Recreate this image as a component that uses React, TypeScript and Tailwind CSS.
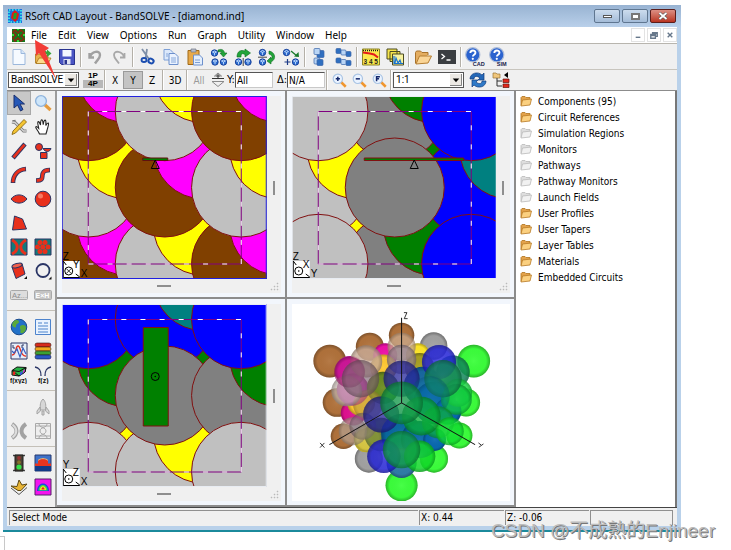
import React from "react";

const R = "#e8301c";
const NAVY = "#2a3565";

const Ico = ({ children, size = "h-[18px] w-[18px]" }: any) => (
  <svg viewBox="0 0 18 18" className={`${size} shrink-0`} aria-hidden="true">
    {children}
  </svg>
);

const Cube = ({ x, y }: any) => (
  <g>
    <circle cx={x} cy={y} r="3.2" fill="#2f6fd0" stroke="#123a96" strokeWidth=".9" />
    <path d={`M${x - 2} ${y - 1}l2-1 2 1-2 1zM${x} ${y}v2.4`} fill="none" stroke="#cfe4ff" strokeWidth=".8" />
  </g>
);

const BlueBox = ({ x, y, s = 7, c = "#2f6fc0" }: any) => (
  <rect x={x} y={y} width={s} height={s} rx="1" fill={c} stroke="#3a64a8" strokeWidth=".7" />
);

const Help = ({ label }: any) => (
  <Ico size="h-[20px] w-[20px]">
    <circle cx="7" cy="7" r="6.4" fill="#2b63cf" stroke="#aebdd8" strokeWidth="1" />
    <path d="M4.800 5.400c0-3 4.600-3 4.600-.2 0 1.800-2.300 1.800-2.300 3.400" fill="none" stroke="#fff" strokeWidth="1.700" />
    <circle cx="7" cy="10.600" r="1" fill="#fff" />
    <text x="7" y="17" fontSize="5" fontWeight="700" fill="#16204a" fontFamily="Liberation Sans, sans-serif">{label}</text>
  </Ico>
);

const Magnifier = ({ children }: any) => (
  <Ico size="h-[15px] w-[15px]">
    <path d="M10.500 10.500l6 6" stroke="#f0962e" strokeWidth="3" />
    <circle cx="7" cy="7" r="5.600" fill="#eaf3ff" stroke="#a9c4e4" strokeWidth="1.400" />
    <g stroke="#14286c" strokeWidth="1.800" fill="none">{children}</g>
  </Ico>
);

const Folder = ({ on }: any) => (
  <svg viewBox="0 0 12 12" className="h-3 w-3 shrink-0" aria-hidden="true">
    <path d="M1 10.500V2.500L2 1.500h3l1 1h4v3" fill={on ? "#e3a24b" : "#dedede"} stroke={on ? "#b0731f" : "#bababa"} strokeWidth=".8" />
    <path d="M1 11l1.500-6 9-1L10 10z" fill={on ? "#fbd080" : "#f1f1f1"} stroke={on ? "#b87a25" : "#bababa"} strokeWidth=".8" />
  </svg>
);

const fileTools = [
  [
    ["New", <Ico><path d="M3 1.500h8l4 4v11H3z" fill="#f6faff" stroke="#9cb8dc" /><path d="M11 1.500v4h4" fill="#d5e5f8" stroke="#9cb8dc" /></Ico>],
    ["Open", <Ico><path d="M1.500 15V6h5l1.500 1.500h6V15z" fill="#e9b04c" stroke="#a87416" strokeWidth=".8" /><path d="M2 15.500l3-5.500h12l-3 5.500z" fill="#fbdc8d" stroke="#a87416" strokeWidth=".8" /><path d="M7 6c1-4 5-4 6-2V1.500l4.500 4L13 9V6.500c-2-1-4-.5-4 1z" fill="#38a33c" /></Ico>],
    ["Save", <Ico><path d="M1.500 1.500h15v15h-13l-2-2z" fill="#4a55c4" stroke="#29338f" /><path d="M4.500 2h9v6.500h-9z" fill="#f3f6ff" /><path d="M5.500 11h7v5.500h-7z" fill="#dfe3f3" /><path d="M6.500 12h2.500v4H6.500z" fill="#29338f" /></Ico>],
  ],
  [
    ["Undo", <Ico><path d="M3.500 5v4.500H8M4 9c1.500-5.500 10-7.500 10-2 0 3.500-2.500 4.500-5 8.500" fill="none" stroke="#a0a0a0" strokeWidth="2.400" /></Ico>],
    ["Redo", <Ico><path d="M14.500 5v4.500H10M14 9C12.500 3.500 4 1.500 4 7c0 3.500 2.500 4.500 5 8.500" fill="none" stroke="#a8a8a8" strokeWidth="1.800" /></Ico>],
  ],
  [
    ["Cut", <Ico><path d="M4 1l7 10M9 1L7.500 11" stroke="#7e8fa8" strokeWidth="1.800" /><ellipse cx="6" cy="12" rx="2.500" ry="2" fill="none" stroke="#1c4eb0" strokeWidth="1.800" /><ellipse cx="13" cy="13" rx="2.700" ry="2.200" fill="none" stroke="#1c4eb0" strokeWidth="2" transform="rotate(30 13 13)" /></Ico>],
    ["Copy", <Ico><path d="M2 1.500h6l3 3V12H2z" fill="#dce9fb" stroke="#7d9fd6" /><path d="M7 5.500h6l3 3v8H7z" fill="#eaf2ff" stroke="#6d90cc" /><path d="M9 10h5M9 12h5M9 14h5M4 6h2M4 8h2" stroke="#7d9fd6" strokeWidth=".9" /></Ico>],
    ["Paste", <Ico><path d="M2 2.500h11v14H2z" fill="#e7a94a" stroke="#a16a17" /><path d="M5 1h5v3H5z" fill="#b8bfcc" stroke="#6d7382" strokeWidth=".7" /><path d="M7.500 7h6l3 3v7h-9z" fill="#e3eefc" stroke="#6d90cc" /><path d="M9 12h5M9 14.500h5" stroke="#7d9fd6" /></Ico>],
    ["Duplicate", <Ico><Cube x={4.500} y={5} /><Cube x={5} y={14} /><Cube x={13.500} y={14} /><path d="M8 2c4-1.500 6 0 6.500 3H17l-3.500 4L10 5h2c-.5-1.500-2-1.500-4-1z" fill="#22a53a" stroke="#0f6b20" strokeWidth=".6" /></Ico>],
    ["Rotate", <Ico><Cube x={4.500} y={14} /><Cube x={14} y={14} /><path d="M9.200 10v8" stroke="#333" strokeWidth=".9" /><path d="M3 9c0-6 4-7.500 8-6V1l5.500 4L11 9V6.500C8 5 7 5.500 7 9z" fill="#22a53a" stroke="#0f6b20" strokeWidth=".6" /></Ico>],
    ["Mirror", <Ico><Cube x={4.500} y={4.500} /><Cube x={4.500} y={14} /><path d="M0 9.200h9" stroke="#333" strokeWidth=".9" /><path d="M11 3c6 1 8 8 2 11v2l-4-3 4-4v2c2-2 1-4-2-5z" fill="#22a53a" stroke="#0f6b20" strokeWidth=".6" /></Ico>],
    ["Translate", <Ico><Cube x={4.500} y={4.500} /><Cube x={13.500} y={14} /><path d="M9 3l6 5" fill="none" stroke="#1a7a2c" strokeWidth="1.300" /><path d="M17 9l-5-.5L16.500 4z" fill="#1a7a2c" /><path d="M2.500 14h6M5.500 11v6" stroke="#1c3a86" strokeWidth="1.200" /></Ico>],
  ],
  [
    ["Group", <Ico><BlueBox x={7} y={2.500} /><BlueBox x={4} y={.5} s={6} c="#b9d5f5" /><BlueBox x={4} y={10} s={6} c="#b9d5f5" /><BlueBox x={7} y={11.500} s={6} /></Ico>],
    ["Ungroup", <Ico><BlueBox x={2} y={.5} s={5} /><BlueBox x={12} y={3.500} s={5} /><BlueBox x={7} y={2} s={5} c="#b9d5f5" /><BlueBox x={2} y={10} s={5} /><BlueBox x={12} y={12.500} s={5} /><BlueBox x={7} y={11.500} s={5} c="#b9d5f5" /></Ico>],
  ],
  [
    ["Run monitor", <Ico><path d="M.5 1h17v16H.5z" fill="#fbe84c" stroke="#8d8424" /><path d="M1 2.500h16" stroke="#1d1d1d" strokeWidth="1.500" strokeDasharray="1 1" /><path d="M1 4.500l7 1 4 1 4 3" stroke="#e31b1b" strokeWidth="2" fill="none" /><text x="1.500" y="15.500" fontSize="6.500" fontWeight="700" fill="#222" fontFamily="Liberation Sans, sans-serif">3 4 5</text></Ico>],
    ["Graph windows", <Ico><path d="M1 1h10v10H1zM4 3.500h10v10H4z" fill="#f6e54d" stroke="#4b4b22" /><path d="M6.500 6h11v11h-11z" fill="#f8f3a0" stroke="#4b4b22" /><path d="M8 8v7.500h9M9 15l1-5 2 5 2-3 1 3" stroke="#1773d1" fill="none" strokeWidth="1.200" /></Ico>],
  ],
  [
    ["Open folder", <Ico><path d="M1.500 15.500V4.500l1-1.500h4l1.500 1.500h6V7" fill="#e4ad60" stroke="#a8722b" /><path d="M2 16l3.500-8h12L14 15z" fill="#fad596" stroke="#b57e32" /></Ico>],
    ["Console", <Ico><path d="M0 2h18v14H0z" fill="#3a3d41" /><path d="M3.500 6l3 2.500-3 2.500M8.500 12h4" stroke="#fff" strokeWidth="1.300" fill="none" /></Ico>],
  ],
  [
    ["CAD help", <Help label="CAD" />],
    ["Simulation help", <Help label="SIM" />],
  ],
];

const palette = [
  [
    ["Select", <Ico><path d="M4 1l10.500 9H10l3 5.500-2.500 1.500-3-6L4 14z" fill="#2558b8" stroke="#1a2f6c" /></Ico>],
    ["Zoom", <Ico><path d="M10 10l6.500 6" stroke="#e59a3c" strokeWidth="3.200" /><circle cx="7" cy="7" r="5.400" fill="#cfe6fa" stroke="#8fb4dc" strokeWidth="1.400" /></Ico>],
    ["Edit", <Ico><path d="M2 4l3 .5 8.500 8.500h3M4 2l.5 3" stroke="#777" strokeWidth="3" fill="none" /><path d="M2 4l3 .5 8.500 8.500h3" stroke="#d4d4d4" strokeWidth="1.400" fill="none" /><path d="M14 1.500l2.500 2.500L5.500 15 2 16.500l1-3.500z" fill="#f4c431" stroke="#8b6a12" strokeWidth=".9" /></Ico>],
    ["Pan", <Ico><path d="M5.500 16c-1-3-4-5.500-3.800-7 .8-1 2 .2 3 1.400C4.500 8 3 5 4 3.700c1.200-.5 1.700 1.500 2.500 3.300 0-2 0-5 1.200-5.300 1.300 0 1.300 3 1.500 5 .3-2 .8-4.800 2-4.600 1.200.3.600 3.400.6 5.400.8-1.500 1.500-3 2.500-2.500 1 .8-.8 5-1.300 7.500-.4 1.500-.7 2-1 3.500z" fill="#fff" stroke="#222" strokeWidth="1.100" /></Ico>],
    ["Straight segment", <Ico><path d="M3 16L15 2" stroke={NAVY} strokeWidth="4.500" /><path d="M3.500 15.400l11-12.800" stroke={R} strokeWidth="2.600" /></Ico>],
    ["Shapes", <Ico><circle cx="5" cy="5" r="3.500" fill={R} stroke={NAVY} /><path d="M9 6.500h8c-1 4-6 4-8 0zM6.500 10.500h6.500v6H6.500z" fill={R} stroke={NAVY} /></Ico>],
    ["Arc", <Ico><path d="M3 17C3 9 8 3.500 16 3" fill="none" stroke={NAVY} strokeWidth="4.600" /><path d="M3 16.300C3 9 8 3.500 15.300 3" fill="none" stroke={R} strokeWidth="2.800" /></Ico>],
    ["S-bend", <Ico><path d="M2 14.500c9 0 5-4 7-7.500 1-2.500 3-3 7-3" fill="none" stroke={NAVY} strokeWidth="4.600" /><path d="M2.700 14.500c8.300 0 4.300-4 6.300-7.500 1-2.500 3-3 6.300-3" fill="none" stroke={R} strokeWidth="2.800" /></Ico>],
    ["Lens", <Ico><path d="M1 9c4-5.500 12-5.500 16 0-4 5.500-12 5.500-16 0z" fill={R} stroke={NAVY} /></Ico>],
    ["Sphere", <Ico><circle cx="9" cy="9" r="7.800" fill={R} stroke={NAVY} /><circle cx="6.500" cy="6" r="2.500" fill="#ff9a82" opacity=".7" /></Ico>],
    ["Polygon", <Ico><path d="M4.500 2l8 3 4 10-14 1z" fill={R} stroke={NAVY} /></Ico>],
    null,
    ["Region", <Ico><path d="M1 1h16v16H1z" fill="#147a7a" stroke={NAVY} /><path d="M2 2c7 4 7 10 0 14M16 2c-7 4-7 10 0 14" fill="none" stroke={R} strokeWidth="3" /></Ico>],
    ["Lattice", <Ico><path d="M1 1h16v16H1z" fill="#147a7a" stroke={NAVY} />{[[6, 4.500], [11, 4.500], [3.500, 9], [8.700, 9], [14, 9], [6, 13.500], [11, 13.500]].map(([x, y]) => <circle key={`${x}-${y}`} cx={x} cy={y} r="2.500" fill={R} />)}</Ico>],
    ["Cylinder", <Ico><path d="M2 5l10-3.500 3 10.500-9 4.500z" fill={R} stroke={NAVY} /><ellipse cx="7" cy="3.500" rx="5.200" ry="2" fill="#f0604c" stroke={NAVY} transform="rotate(-16 7 3.500)" /><path d="M17 14v3h-3z" fill="#111" /></Ico>],
    ["Ring", <Ico><circle cx="9" cy="8.500" r="6.500" fill="none" stroke={NAVY} strokeWidth="1.800" /><path d="M17.500 14.500v3h-3z" fill="#111" /></Ico>],
    ["Text", <Ico><rect x=".5" y="4.500" width="17" height="9" rx="1" fill="#ddd" stroke="#a9a9a9" /><text x="2" y="12" fontSize="7.500" fill="#8d8d8d" fontFamily="Liberation Sans, sans-serif">Az...</text></Ico>],
    ["Field", <Ico><rect x=".5" y="4.500" width="17" height="9" rx="1" fill="#c4c4c4" stroke="#a9a9a9" /><text x="1.500" y="11.800" fontSize="7" fontWeight="700" fill="#fff" fontFamily="Liberation Sans, sans-serif">E×H</text></Ico>],
  ],
  [
    ["Globe", <Ico><circle cx="9" cy="9" r="7.800" fill="#2271c8" stroke="#174a8c" /><path d="M3 4c3-3 6-2 6 0s-3 1-3 4-3 1-4-1zM10 8c3-2 6-1 6 2s-3 6-5 5 1-3-1-4z" fill="#5aa93a" /></Ico>],
    ["Table", <Ico><path d="M1.500 1.500h15v15h-15z" fill="#e9f3ff" stroke="#4d83cc" /><path d="M4 5h4M10 5h4M4 8h10M4 11h10M4 14h10" stroke="#4d83cc" strokeWidth="1.200" /></Ico>],
    ["Spectrum", <Ico><path d="M1 1h16v16H1z" fill="#e6edf8" stroke={NAVY} /><path d="M2 13c5 0 3-9 6-9s2 11 8 10" stroke={R} fill="none" strokeWidth="1.300" /><path d="M2 9l2 2 3-4 3 8 3-9 3 6" stroke="#355fc0" fill="none" strokeWidth="1.200" /><path d="M3 3v3h2M14 3h-2v3" stroke={NAVY} fill="none" /></Ico>],
    ["Layers", <Ico><rect x="1" y="1" width="16" height="4" rx="2" fill="#d62c1d" stroke="#3a1711" strokeWidth=".6" /><rect x="1" y="5" width="16" height="4" rx="2" fill="#f2a71c" stroke="#3a1711" strokeWidth=".6" /><rect x="1" y="9" width="16" height="4" rx="2" fill="#3ca035" stroke="#3a1711" strokeWidth=".6" /><rect x="1" y="13" width="16" height="4" rx="2" fill="#2c57c4" stroke="#111a45" strokeWidth=".6" /></Ico>],
    ["f(xyz)", <Ico><path d="M2 4.500L7 1l9 .5-1 4.500-6 4-7-1z" fill="#28b245" stroke="#111" /><path d="M2 4.500l7 1 7-4-1 4.500-6 4z" fill="none" stroke="#111" /><path d="M3 5.500l2.500.3L5 9l-2.300-.3z" fill="#e22" /><path d="M10 6.500l2.500-1.400v3L10 9.500z" fill="#3659dd" /><path d="M13 4.500l2-1.200-.5 2.700-1.500 1z" fill="#d436d8" /><text x="0" y="17" fontSize="6.500" fontWeight="700" fill="#111" fontFamily="Liberation Sans, sans-serif">f(xyz)</text></Ico>],
    ["f(z)", <Ico><path d="M1 1c5 1 6 4 6 9M17 1c-5 1-6 4-6 9" fill="none" stroke={NAVY} strokeWidth="1.300" /><text x="4" y="17" fontSize="7" fontWeight="700" fill="#111" fontFamily="Liberation Sans, sans-serif">f(z)</text></Ico>],
  ],
  [
    null,
    ["Launch", <Ico><path d="M9 1c3 3 3 6 2.500 11h-5C6 7 6 4 9 1zM6 9l-3 4v3l3.500-3zM12 9l3 4v3l-3.500-3zM8 13h2v4H8z" fill="#d6d6d6" stroke="#a5a5a5" /></Ico>],
    ["Pathway", <Ico><path d="M2 2c6 4 6 10 0 14M16 2c-6 4-6 10 0 14" fill="none" stroke="#a2a2a2" strokeWidth="4" /><path d="M2.500 2.500c5 4 5 9 0 13" fill="none" stroke="#dedede" strokeWidth="2" /></Ico>],
    ["Monitor", <Ico><path d="M1.500 1.500h15v15h-15z" fill="#eee" stroke="#a8a8a8" /><path d="M5 2c0 4 7 3 7 7s-7 3-7 7M13 2c0 4-7 3-7 7s7 3 7 7M2 4h14M2 14h14" fill="none" stroke="#a8a8a8" /></Ico>],
  ],
  [
    ["Run", <Ico><path d="M3 1.500h12M3 16.500h12" stroke="#444" strokeWidth="1.500" /><path d="M5 1h8v16H5z" fill="#4b4235" stroke="#1c1c1c" /><circle cx="9" cy="4" r="1.900" fill="#933" /><circle cx="9" cy="8.200" r="1.900" fill="#87702a" /><circle cx="9" cy="13" r="2.600" fill="#35e04a" /></Ico>],
    ["Index profile", <Ico><path d="M1 1h16v16H1z" fill="#3f72c8" stroke="#26386f" /><path d="M1 12h16v5H1z" fill="#123a86" /><path d="M1 12V9.500h3V6.500c2-2 8-2 10 0v3h3V12z" fill="#e6341f" /><path d="M4 6.500c2-2.500 8-2.500 10 0" fill="none" stroke="#f7b36a" /></Ico>],
    ["Mode solver", <Ico><path d="M1 10l8 6.500 8-7" fill="none" stroke="#555" /><path d="M1 8l6 .5L9 2l3 5 5-1-6 6.500-3 0z" fill="#e9b534" stroke="#5f4a14" /></Ico>],
    ["Field map", <Ico><path d="M1 1h16v16H1z" fill="#f414ee" stroke="#55206a" /><path d="M3 13c0-10 12-10 12 0z" fill="#2144e0" /><path d="M4.500 12.500c0-7.500 9-7.500 9 0z" fill="#3be04a" /><path d="M6 12c0-5 6-5 6 0z" fill="#f6e52a" /><path d="M7.500 11.500c0-3 3-3 3 0z" fill="#e22" /></Ico>],
  ],
];

const tree = [
  ["Components (95)", true],
  ["Circuit References", true],
  ["Simulation Regions", false],
  ["Monitors", false],
  ["Pathways", false],
  ["Pathway Monitors", false],
  ["Launch Fields", false],
  ["User Profiles", true],
  ["User Tapers", true],
  ["Layer Tables", true],
  ["Materials", true],
  ["Embedded Circuits", true],
] as const;

const BROWN = "#804000";
const LIGHT = "#c0c0c0";
const DARK = "#808080";
const BLUE = "#0000ff";
const GREEN = "#008000";
const TEAL = "#008080";
const YELLOW = "#ffff00";
const PINK = "#ff00ff";

// [column, row, colour] in painting order
const frontView = [
  [0, 2, BROWN], [0.5, 1.5, PINK],
  [0, 1, LIGHT], [1, 2, LIGHT], [0.5, 0.5, YELLOW], [1.5, 1.5, YELLOW],
  [0, 0, BROWN], [1, 1, BROWN], [2, 2, BROWN], [0.5, -0.5, PINK], [1.5, 0.5, PINK], [2.5, 1.5, PINK],
  [1, 0, LIGHT], [2, 1, LIGHT], [1.5, -0.5, YELLOW], [2.5, 0.5, YELLOW],
  [2, 0, BROWN], [2.5, -0.5, PINK],
] as const;

const sideView = [
  [0.5, 1.5, YELLOW], [1.5, 0.5, GREEN],
  [0, 1, LIGHT], [1, 2, DARK], [0.5, 0.5, YELLOW], [1.5, 1.5, GREEN],
  [1, 0, DARK], [2, 1, BLUE], [1.5, -0.5, GREEN], [2.5, 0.5, TEAL],
  [0, 0, LIGHT], [1, 1, DARK], [2, 2, BLUE], [0, 2, LIGHT], [2, 0, BLUE],
] as const;

const topView = [
  [0.5, 1.5, YELLOW], [0, 1, DARK], [0.5, 0.5, GREEN], [0, 0, BLUE], [0, 2, LIGHT],
  [1.5, 0.5, GREEN], [1, 0, BLUE], [1, 2, LIGHT], [1.5, -0.5, TEAL], [1.5, 1.5, YELLOW], [1, 1, DARK],
  [2, 1, DARK], [2.5, 0.5, GREEN], [2, 0, BLUE], [2, 2, LIGHT],
] as const;

const Axes = ({ up, mid, right, dot }: any) => (
  <g>
    <rect x="1" y="165" width="17" height="17" fill="#fff" />
    <path d="M1.500 165v16.500H18M1.500 165l3 4M18 181l-4-3" stroke="#000" fill="none" />
    <circle cx="7" cy="175" r="4" fill="#fff" stroke="#000" />
    {dot ? <circle cx="7" cy="175" r=".8" /> : <path d="M4.500 172.500l5 5M9.500 172.500l-5 5" stroke="#000" strokeWidth=".8" />}
    <g fontSize="10" fontFamily="Liberation Sans, sans-serif" fill="#000">
      <text x="1" y="164">{up}</text>
      <text x="11" y="172">{mid}</text>
      <text x="19" y="181">{right}</text>
    </g>
  </g>
);

const Pane = ({ children }: any) => (
  <div className="border-r-2 border-b-2 border-[#8c8c8c] bg-[#f2f6fc] pt-[5px] pr-1 pb-1 pl-[5px]">{children}</div>
);

const Scrolled = ({ title, circles, outline, axes, children }: any) => (
  <Pane>
    <div className="flex">
      <svg viewBox="0 0 205 183" preserveAspectRatio="xMidYMid slice" className="h-[183px] min-w-0 flex-1" role="img" aria-label={title}>
        {circles.map(([c, r, fill]: any, i: number) => (
          <circle key={i} cx={26.7 + c * 76.3} cy={15.2 + r * 76.3} r="49.500" fill={fill} stroke="#801010" />
        ))}
        <path d="M26.500 15.500h153v152.500h-153z" fill="none" stroke="#800080" />
        <path d="M26.500 15.500h153v152.500h-153z" fill="none" stroke="#fff" strokeDasharray="5 14.100" strokeDashoffset="-14" />
        {children}
        <Axes {...axes} />
        <rect x=".5" y=".5" width="204" height="182" fill="none" stroke={outline} />
      </svg>
      <div className="flex w-[14px] items-center justify-center bg-[#f0f0f0]">
        <div className="h-[14px] w-[2px] bg-[#8e8e8e]" />
      </div>
    </div>
    <div className="flex h-[14px] items-center bg-[#f0f0f0]">
      <div className="flex flex-1 justify-center">
        <div className="h-[2px] w-[14px] bg-[#8e8e8e]" />
      </div>
      <svg viewBox="0 0 14 14" className="h-[14px] w-[14px]" aria-hidden="true">
        <path d="M10 4h1v1h-1zM7 7h1v1H7zM10 7h1v1h-1zM4 10h1v1H4zM7 10h1v1H7zM10 10h1v1h-1z" fill="#9a9a9a" stroke="#c8c8c8" strokeWidth=".6" />
      </svg>
    </div>
  </Pane>
);

// [x, y, radius, colour, opacity], back to front
const balls = [
  [131, 195, 49, "#b07038", 0.98], [251, 152, 42, "#b07038", 0.98], [346, 118, 38, "#b07038", 0.98],
  [153, 319, 43, "#b07038", 0.98], [172, 420, 38, "#b07038", 0.98],
  [442, 150, 41, "#a2a2a2", 1], [248, 487, 42, "#a2a2a2", 1],
  [562, 195, 49, "#3cff3c", 1], [539, 319, 42, "#3cff3c", 1], [519, 418, 39, "#3cff3c", 1],
  [443, 487, 42, "#3cff3c", 1], [346, 567, 48, "#3cff3c", 1],
  [395, 178, 36, "#ffe628", 1], [297, 178, 36, "#ee10a8", 1], [192, 225, 45, "#ee20c8", 1],
  [202, 350, 38, "#e01090", 1], [240, 432, 36, "#ffe830", 1], [292, 215, 40, "#ffc830", 1],
  [225, 318, 42, "#ffc830", 1], [200, 280, 48, "#e020c0", 1],
  [400, 215, 44, "#a8a020", 1], [290, 275, 48, "#6c8c20", 1], [245, 325, 44, "#c0a040", 0.6],
  [285, 415, 50, "#70921c", 1], [410, 270, 58, "#1868a0", 1], [346, 415, 62, "#0868a0", 1],
  [445, 320, 64, "#0868b0", 1], [400, 430, 56, "#0868a8", 1], [485, 345, 40, "#0868b0", 1],
  [445, 430, 34, "#0868b0", 1], [346, 500, 45, "#307ca8", 1],
  [240, 196, 48, "#ccae9a", 0.82], [346, 152, 42, "#d0ae90", 0.75], [182, 284, 46, "#c0b4ac", 0.75],
  [200, 405, 42, "#b8a494", 0.7], [190, 228, 46, "#b81078", 0.6], [223, 248, 56, "#806474", 0.68],
  [346, 190, 44, "#988490", 0.75],
  [230, 390, 40, "#807080", 0.6], [245, 425, 42, "#a09860", 0.4],
  [500, 228, 50, "#128a5c", 0.85], [458, 198, 51, "#2424dc", 0.85], [346, 248, 54, "#28289c", 0.78],
  [285, 355, 54, "#24249c", 0.8], [293, 480, 50, "#2424d8", 0.85],
  [515, 290, 42, "#1cde44", 0.85], [510, 310, 46, "#10cc40", 0.8], [470, 248, 56, "#128e54", 0.8],
  [430, 300, 60, "#0870a0", 0.35],
  [455, 378, 48, "#0cb838", 0.7], [405, 360, 58, "#08b038", 0.8], [346, 320, 64, "#109a48", 0.8],
  [490, 405, 42, "#10e030", 0.8], [400, 480, 47, "#10dc28", 0.85], [346, 460, 56, "#10a048", 0.8],
] as const;

const Model = () => (
  <Pane>
    <svg viewBox="18 25 654 588" className="h-[197px] w-full bg-white" role="img" aria-label="3D view">
      <defs>
        <radialGradient id="shade">
          <stop offset="0" stopColor="#fff" stopOpacity=".06" />
          <stop offset=".75" stopColor="#000" stopOpacity=".02" />
          <stop offset="1" stopColor="#000" stopOpacity=".3" />
        </radialGradient>
      </defs>
      {balls.map(([x, y, r, fill, o], i) => (
        <g key={i} opacity={o}>
          <circle cx={x} cy={y} r={r} fill={fill} />
          <circle cx={x} cy={y} r={r} fill="url(#shade)" />
        </g>
      ))}
      <path d="M346 65v255L130 445M346 320l220 125" fill="none" stroke="#111" strokeWidth="3" />
      <path d="M353 50h9l-8 18h10M102 440l13 14M115 440l-13 14M576 440l8 6M591 443l-14 10" fill="none" stroke="#111" strokeWidth="2.500" />
    </svg>
  </Pane>
);

const Sep = () => <div className="mx-px h-5 w-[2px] shrink-0 border-l border-[#b4b0a8] bg-white" />;

const Combo = ({ label, value, width }: any) => (
  <div className={`relative ${width}`}>
    <select aria-label={label} className="h-4 w-full appearance-none border border-[#555] bg-white pl-[2px] font-[Roboto,sans-serif] text-[10px] leading-3 text-black">
      <option>{value}</option>
    </select>
    <svg viewBox="0 0 13 13" className="pointer-events-none absolute top-[2px] right-[2px] h-3 w-3" aria-hidden="true">
      <path d="M0 0h13v13H0z" fill="#ece9e4" />
      <path d="M12.500 0v12.500H0" fill="none" stroke="#777" />
      <path d="M3 5h7L6.500 9z" fill="#000" />
    </svg>
  </div>
);

const Field = ({ label, value }: any) => (
  <label className="flex items-center text-[11px]">
    {label}
    <input defaultValue={value} className="h-4 w-[38px] border border-[#c9c9c9] border-t-[#555] border-l-[#555] bg-white px-px text-[10px]" />
  </label>
);

const App = () => {
  return (
    <div className="relative bg-white pt-[5px] pr-[50px] pl-[3px] font-['DejaVu_Sans_Condensed','DejaVu_Sans',sans-serif] text-black">
      <div className="border-b-2 border-[#1b8a9c] bg-[#b9d1ea] px-1 pb-1">
        <header className="-mx-1 flex h-[22px] items-center bg-linear-to-b from-[#98b3d2] to-[#b9d0ea] pr-[5px] pl-[5px]">
          <svg viewBox="0 0 14 14" className="h-[14px] w-[14px]" aria-hidden="true">
            <path d="M0 0h14v14H0z" fill="#1d6fe0" />
            <path d="M1 1h12v12H1z" fill="none" stroke="#36e0e8" strokeWidth="2" strokeDasharray="1.500 1.500" />
            <path d="M7 1l4 4-1 5-3 3-4-4 1-5z" fill="#e01c16" />
            <path d="M6 4h3l-1 6H5z" fill="#1da32c" />
          </svg>
          <h1 className="ml-[3px] flex-1 font-['Noto_Sans',sans-serif] text-[10px] leading-4">RSoft CAD Layout - BandSOLVE - [diamond.ind]</h1>
          <div className="flex gap-[2px]">
            <button type="button" aria-label="Minimize" className="flex h-[14px] w-[26px] items-center justify-center rounded-[2px] border border-[#5f7690] bg-linear-to-b from-[#ccdcee] to-[#a4bcd8]">
              <span className="h-[3px] w-[9px] border border-[#555] bg-white" />
            </button>
            <button type="button" aria-label="Maximize" className="flex h-[14px] w-[26px] items-center justify-center rounded-[2px] border border-[#5f7690] bg-linear-to-b from-[#ccdcee] to-[#a4bcd8]">
              <span className="h-[7px] w-[9px] border-2 border-[#777] bg-white" />
            </button>
            <button type="button" aria-label="Close" className="flex h-[14px] w-[26px] items-center justify-center rounded-[2px] border border-[#5b1d1a] bg-linear-to-b from-[#dc8f84] to-[#b8321f]">
              <svg viewBox="0 0 10 8" className="h-2 w-[10px]" aria-hidden="true">
                <path d="M1.500 1l7 6M8.500 1l-7 6" stroke="#555" strokeWidth="3" />
                <path d="M1.500 1l7 6M8.500 1l-7 6" stroke="#fff" strokeWidth="1.800" />
              </svg>
            </button>
          </div>
        </header>

        <div className="bg-[#f0f0f0]">
          <nav className="flex h-4 items-center bg-white pl-[5px] font-['Noto_Sans',sans-serif] text-[10px] leading-4">
            <svg viewBox="0 0 13 13" className="mr-[6px] h-[13px] w-[13px]" aria-hidden="true">
              <path d="M0 0h13v13H0z" fill="#13781a" />
              <path d="M1 3l2-2 3 3 3-3 3 3-3 3 3 3-3 2-3-3-3 3-2-3 3-3z" fill="none" stroke="#8a2a10" strokeWidth="1.500" />
              <path d="M5 0h2M0 6h2M11 6h2M5 12h2M6 6h1" stroke="#35d83a" strokeWidth="2" />
            </svg>
            <div className="flex flex-1 gap-[11px]">
              {["File", "Edit", "View", "Options", "Run", "Graph", "Utility", "Window", "Help"].map((m) => (
                <button type="button" key={m}>{m}</button>
              ))}
            </div>
            <div className="flex gap-[2px]">
              {["M4 9h5", "M3 6h5v4H3zM5 6V4h5v4H8M3 7h5M5 5h5", "M4 4l5 5M9 4L4 9"].map((d) => (
                <button type="button" key={d} aria-label="Document window" className="h-[14px] w-[14px] border border-[#e3e3e3]">
                  <svg viewBox="0 0 13 13" className="h-3 w-3" aria-hidden="true">
                    <path d={d} fill="none" stroke="#66778a" strokeWidth="1.500" />
                  </svg>
                </button>
              ))}
            </div>
          </nav>

          <div className="flex h-[26px] items-center border-t border-[#b8b5ae]">
            {fileTools.map((group, g) => (
              <React.Fragment key={g}>
                {g > 0 && <Sep />}
                {group.map(([name, icon]: any) => (
                  <button type="button" key={name} aria-label={name} className="flex h-6 w-6 items-center justify-center">{icon}</button>
                ))}
              </React.Fragment>
            ))}
          </div>

          <div className="flex h-[21px] items-center border-t border-[#c8c5be] pl-px text-[10px]">
            <Combo label="Simulator" value="BandSOLVE" width="w-[71px]" />
            <button type="button" className="ml-1 h-4 w-5 bg-[linear-gradient(#f0f0f0_50%,#b8b8b8_50%)] font-['Liberation_Sans',sans-serif] text-[8px] leading-2 font-bold">
              <span className="block">1P</span>
              <span className="block">4P</span>
            </button>
            <Sep />
            <button type="button" className="w-4">X</button>
            <button type="button" className="h-[18px] w-5 border border-[#9a9a9a] bg-[#c4c4c4]">Y</button>
            <button type="button" className="w-[18px]">Z</button>
            <Sep />
            <button type="button" className="w-5">3D</button>
            <Sep />
            <button type="button" className="w-5 text-[#9a9a9a]">All</button>
            <svg viewBox="0 0 14 16" className="mx-[2px] h-4 w-[14px]" aria-hidden="true">
              <path d="M1 6.500h12M7 1.500v5M4.500 4h5" stroke="#333" fill="none" />
              <path d="M3 4.500L7 1l4 3.500M1 9.500h12l-6 5z" fill="none" stroke="#8a8a8a" />
            </svg>
            <Field label="Y:" value="All" />
            <div className="w-1" />
            <Field label="Δ:" value="N/A" />
            <Sep />
            <button type="button" aria-label="Zoom in" className="flex w-5 justify-center"><Magnifier><path d="M4.500 7h5M7 4.500v5" /></Magnifier></button>
            <button type="button" aria-label="Zoom out" className="flex w-5 justify-center"><Magnifier><path d="M4.500 7h5" /></Magnifier></button>
            <button type="button" aria-label="Zoom full" className="flex w-5 justify-center"><Magnifier><path d="M5.500 10V4.500h4M5.500 7h3" /></Magnifier></button>
            <Sep />
            <Combo label="Aspect ratio" value="1:1" width="w-[71px]" />
            <button type="button" aria-label="Refresh" className="flex w-7 justify-center">
              <Ico>
                <path d="M1 8c0-6 8-8 12-4l2-2v7H9l2-2C8 4.500 5 5 5 8z" fill="#2468b8" stroke="#123c7c" strokeWidth=".7" />
                <path d="M17 10c0 6-8 8-12 4l-2 2V9h6l-2 2c3 2.500 6 2 6-1z" fill="#2f7ac8" stroke="#123c7c" strokeWidth=".7" />
              </Ico>
            </button>
            <button type="button" aria-label="Toggle tree">
              <Ico>
                <path d="M1 2h3l1 1h3v4H1z" fill="#f0c67c" stroke="#9a7433" strokeWidth=".7" />
                <path d="M5 7v8h5M5 10h5" fill="none" stroke="#333" />
                <path d="M11 8h6v3.500h-6zM11 13h6v3.500h-6z" fill="#e2281c" stroke="#5b120c" strokeWidth=".7" />
                <path d="M16 1v6l-4-3z" fill="#000" />
              </Ico>
            </button>
          </div>

          <div className="flex border-t border-b border-t-[#8c8c8c] border-b-[#444]">
            <aside className="w-[50px] shrink-0 border-r-2 border-[#9c9c9c]">
              {palette.map((group, g) => (
                <div key={g} className={g > 0 ? "mt-[3px] border-t border-[#c4c0b8] pt-1" : ""}>
                  <div className="grid grid-cols-[24px_24px]">
                    {group.map((tool: any, i) =>
                      tool ? (
                        <button
                          type="button"
                          key={tool[0]}
                          aria-label={tool[0]}
                          className={`flex h-6 w-6 items-center justify-center ${tool[0] === "Select" ? "border border-[#a8a8a8] bg-[#c8c8c8]" : ""}`}
                        >
                          {tool[1]}
                        </button>
                      ) : (
                        <span key={i} />
                      )
                    )}
                  </div>
                </div>
              ))}
            </aside>

            <main className="grid min-w-0 flex-1 grid-cols-2">
              <Scrolled title="XZ view" circles={frontView} outline="#2020e0" axes={{ up: "Z", mid: "Y", right: "X" }}>
                <path d="M81 62h25v2.500H81z" fill={GREEN} stroke="#601010" />
                <path d="M93.500 64l-4 8.500h8z" fill="none" stroke="#000" />
              </Scrolled>
              <Scrolled title="YZ view" circles={sideView} outline="#e8ecf2" axes={{ up: "Z", mid: "X", right: "Y", dot: true }}>
                <path d="M72.500 62H172v2.500H72.500z" fill={GREEN} stroke="#801010" />
                <path d="M122.500 64l-4 8.500h8z" fill="none" stroke="#000" />
              </Scrolled>
              <Scrolled title="XY view" circles={topView} outline="#e8ecf2" axes={{ up: "Y", mid: "Z", right: "X", dot: true }}>
                <path d="M81.500 23.500h25v98.500h-25z" fill={GREEN} stroke="#801010" />
                <circle cx="93.500" cy="72.500" r="4" fill="none" stroke="#000" />
                <circle cx="93.500" cy="72.500" r=".8" />
              </Scrolled>
              <Model />
            </main>

            <ul className="w-[161px] shrink-0 border-r-2 border-[#777] bg-white pt-[2px] pl-1 text-[10px]">
              {tree.map(([name, on]) => (
                <li key={name} className="flex h-4 items-center gap-[6px]">
                  <Folder on={on} />
                  {name}
                </li>
              ))}
            </ul>
          </div>

          <footer className="flex gap-px pt-[2px] pr-1 pb-px pl-[2px] text-[10px] leading-[14px]">
            <div className="flex-1 border-t border-l border-[#909090] pl-[2px]">Select Mode</div>
            <div className="w-[85px] border-t border-l border-[#909090] pl-px">X: 0.44</div>
            <div className="w-[84px] border-t border-l border-[#909090] pl-px">Z: -0.06</div>
            <div className="w-[83px] border-t border-r border-l border-[#909090]" />
          </footer>
        </div>
      </div>
      <div className="mt-1 -ml-[3px] h-[15px] w-[5px] border-t border-r border-[#c8c8c8]" />

      <svg viewBox="0 0 24 42" className="pointer-events-none absolute top-[39px] left-[34px] h-[42px] w-6" aria-hidden="true">
        <path d="M1 1l1 16 3-3 17 26L11 12l4-3z" fill="#f23c36" />
      </svg>
      <p className="absolute right-4 bottom-2 font-['Liberation_Sans','Noto_Sans_CJK_SC',sans-serif] text-[19px] leading-6 whitespace-nowrap text-[#bcbcbc] [text-shadow:1px_1px_0_#777]">
        CSDN @不成熟的Enjineer
      </p>
    </div>
  );
};

export default App;
